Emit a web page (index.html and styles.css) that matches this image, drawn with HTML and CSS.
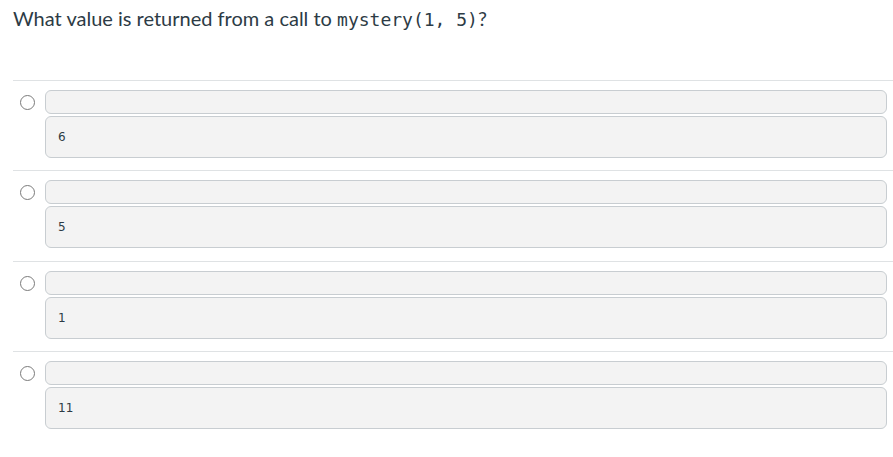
FILE: index.html
```html
<!DOCTYPE html>
<html lang="en">
<head>
<meta charset="utf-8">
<title>Quiz question</title>
<link rel="stylesheet" href="styles.css">
</head>
<body>
<div class="question">
  <h2 class="question-text">What value is returned from a call to <code class="code">mystery(1, 5)</code>?</h2>
  <div class="answers">
    <div class="answer">
      <span class="radio"></span>
      <div class="answer-body">
        <div class="box box-top"></div>
        <div class="box box-main">6</div>
      </div>
    </div>
    <div class="answer">
      <span class="radio"></span>
      <div class="answer-body">
        <div class="box box-top"></div>
        <div class="box box-main">5</div>
      </div>
    </div>
    <div class="answer">
      <span class="radio"></span>
      <div class="answer-body">
        <div class="box box-top"></div>
        <div class="box box-main">1</div>
      </div>
    </div>
    <div class="answer">
      <span class="radio"></span>
      <div class="answer-body">
        <div class="box box-top"></div>
        <div class="box box-main">11</div>
      </div>
    </div>
  </div>
</div>
</body>
</html>
```
FILE: styles.css
```css
html, body {
  margin: 0;
  padding: 0;
  background: #ffffff;
}

body {
  font-family: "Lato", "Liberation Sans", sans-serif;
  color: #2d3b45;
}

.question {
  padding-left: 13px;
}

.question-text {
  margin: 0;
  padding-top: 6px;
  height: 24px;
  font-size: 20px;
  line-height: 24px;
  font-weight: 400;
  color: #2d3b45;
}

.code {
  font-family: "DejaVu Sans Mono", "Liberation Mono", monospace;
  font-size: 18px;
  line-height: 1;
}

.answers {
  margin-top: 50px;
}

.answer {
  display: flex;
  align-items: flex-start;
  border-top: 1px solid #dfe2e4;
  padding: 9px 6px 12.33px 0;
}

.radio {
  flex: 0 0 auto;
  box-sizing: border-box;
  width: 15px;
  height: 15px;
  margin: 5px 10px 0 7px;
  border: 1.5px solid #7a7a7a;
  border-radius: 50%;
  background: #fff;
}

.answer-body {
  flex: 1 1 auto;
  display: flex;
  flex-direction: column;
  gap: 2px;
}

.box {
  box-sizing: border-box;
  background: #f3f3f3;
  border: 1px solid #c8cdd1;
  border-radius: 6px;
}

.box-top {
  height: 24px;
}

.box-main {
  height: 42px;
  display: flex;
  align-items: center;
  padding-left: 12px;
  font-family: "DejaVu Sans", "Liberation Sans", sans-serif;
  font-size: 12px;
  color: #2d3b45;
}
```
